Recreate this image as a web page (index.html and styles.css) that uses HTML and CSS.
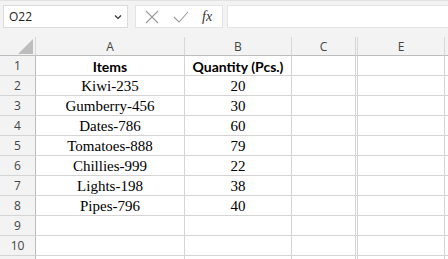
FILE: index.html
```html
<!DOCTYPE html>
<html>
<head>
<meta charset="utf-8">
<link rel="stylesheet" href="styles.css">
</head>
<body>
<div class="toolbar">
  <div class="namebox">
    <span class="ref">O22</span>
    <svg class="chev" width="8" height="6" viewBox="0 0 8 6"><path d="M1 1.5 L4 4.5 L7 1.5" fill="none" stroke="#333" stroke-width="1.2"/></svg>
  </div>
  <div class="fbtns">
    <svg width="14" height="14" viewBox="0 0 14 14"><path d="M1 1 L13 13 M13 1 L1 13" stroke="#9a9a9a" stroke-width="1.1" fill="none"/></svg>
    <svg width="16" height="14" viewBox="0 0 16 14"><path d="M1 7 L6 12 L15 2" stroke="#9a9a9a" stroke-width="1.1" fill="none"/></svg>
    <span class="fx">fx</span>
  </div>
  <div class="finput"></div>
</div>
<div class="sheet">
  <div class="row head">
    <div class="c rh corner"><span class="tri"></span></div>
    <div class="c a">A</div>
    <div class="c b">B</div>
    <div class="c cc">C</div>
    <div class="c d"></div>
    <div class="c e">E</div>
    <div class="c f"></div>
  </div>
  <div class="row"><div class="c rh">1</div><div class="c a bold">Items</div><div class="c b bold">Quantity (Pcs.)</div><div class="c cc"></div><div class="c d"></div><div class="c e"></div><div class="c f"></div></div>
  <div class="row"><div class="c rh">2</div><div class="c a serif">Kiwi-235</div><div class="c b serif">20</div><div class="c cc"></div><div class="c d"></div><div class="c e"></div><div class="c f"></div></div>
  <div class="row"><div class="c rh">3</div><div class="c a serif">Gumberry-456</div><div class="c b serif">30</div><div class="c cc"></div><div class="c d"></div><div class="c e"></div><div class="c f"></div></div>
  <div class="row"><div class="c rh">4</div><div class="c a serif">Dates-786</div><div class="c b serif">60</div><div class="c cc"></div><div class="c d"></div><div class="c e"></div><div class="c f"></div></div>
  <div class="row"><div class="c rh">5</div><div class="c a serif">Tomatoes-888</div><div class="c b serif">79</div><div class="c cc"></div><div class="c d"></div><div class="c e"></div><div class="c f"></div></div>
  <div class="row"><div class="c rh">6</div><div class="c a serif">Chillies-999</div><div class="c b serif">22</div><div class="c cc"></div><div class="c d"></div><div class="c e"></div><div class="c f"></div></div>
  <div class="row"><div class="c rh">7</div><div class="c a serif">Lights-198</div><div class="c b serif">38</div><div class="c cc"></div><div class="c d"></div><div class="c e"></div><div class="c f"></div></div>
  <div class="row"><div class="c rh">8</div><div class="c a serif">Pipes-796</div><div class="c b serif">40</div><div class="c cc"></div><div class="c d"></div><div class="c e"></div><div class="c f"></div></div>
  <div class="row"><div class="c rh">9</div><div class="c a"></div><div class="c b"></div><div class="c cc"></div><div class="c d"></div><div class="c e"></div><div class="c f"></div></div>
  <div class="row"><div class="c rh">10</div><div class="c a"></div><div class="c b"></div><div class="c cc"></div><div class="c d"></div><div class="c e"></div><div class="c f"></div></div>
  <div class="row"><div class="c rh"></div><div class="c a"></div><div class="c b"></div><div class="c cc"></div><div class="c d"></div><div class="c e"></div><div class="c f"></div></div>
</div>
</body>
</html>
```
FILE: styles.css
```css
html, body {
  margin: 0;
  padding: 0;
  background: #fff;
  overflow: hidden;
  width: 448px;
  height: 259px;
}
.toolbar {
  background: #f3f3f3;
  border-top: 1px solid #e2e2e2;
  display: flex;
  align-items: flex-start;
  padding-top: 4px;
  box-sizing: border-box;
  height: 37px;
  padding-left: 3px;
}
.namebox {
  height: 21px;
  background: #fff;
  border: 1px solid #dcdcdc;
  display: flex;
  align-items: center;
  justify-content: space-between;
  padding: 0 5px 0 5px;
  box-sizing: content-box;
  width: 113px;
}
.ref {
  font-family: "Open Sans", "Noto Sans", sans-serif;
  font-size: 12px;
  color: #222;
}
.chev { margin-top: 1px; }
.fbtns {
  margin-left: 7px;
  background: #fff;
  border: 1px solid #e4e4e4;
  display: flex;
  align-items: center;
  padding-left: 9px;
  box-sizing: border-box;
  width: 88px;
  height: 23px;
  gap: 14px;
}
.fx {
  font-family: "Liberation Serif", serif;
  font-style: italic;
  font-size: 14px;
  color: #333;
  margin-left: -1px;
}
.finput {
  margin-left: 4px;
  flex: 1;
  height: 23px;
  background: #fff;
  border: 1px solid #e4e4e4;
  border-right: none;
  box-sizing: border-box;
}
.sheet { background: #fff; }
.row {
  display: flex;
  height: 20px;
}
.row.head { height: 19px; }
.c {
  box-sizing: border-box;
  border-right: 1px solid #d4d4d4;
  border-bottom: 1px solid #d4d4d4;
  display: flex;
  align-items: center;
  justify-content: center;
  flex: none;
  color: #000;
  white-space: nowrap;
  overflow: hidden;
}
.head .c {
  background: #f3f3f3;
  border-bottom: 1px solid #bdbdbd;
  border-right: 1px solid #d8d8d8;
  font-family: "Open Sans", "Noto Sans", sans-serif;
  font-size: 12px;
  color: #444;
}
.rh {
  width: 36px;
  background: #f3f3f3;
  border-right: 1px solid #bdbdbd;
  font-family: "Open Sans", "Noto Sans", sans-serif;
  font-size: 12px;
  color: #444;
}
.head .rh { border-right: 1px solid #d8d8d8; }
.corner { position: relative; }
.tri {
  position: absolute;
  right: 2px;
  bottom: 1px;
  width: 0;
  height: 0;
  border-left: 15px solid transparent;
  border-bottom: 15px solid #bdbdbd;
}
.a { width: 149px; }
.b { width: 107px; }
.cc { width: 64px; }
.d { width: 2px; }
.e { width: 87px; }
.f { width: 10px; border-right: none; }
.bold {
  font-family: Lato, "Open Sans", sans-serif;
  font-weight: bold;
  font-size: 14px;
  padding-top: 1px;
}
.serif {
  font-family: "Liberation Serif", serif;
  font-size: 15px;
  padding-top: 1px;
}
```
